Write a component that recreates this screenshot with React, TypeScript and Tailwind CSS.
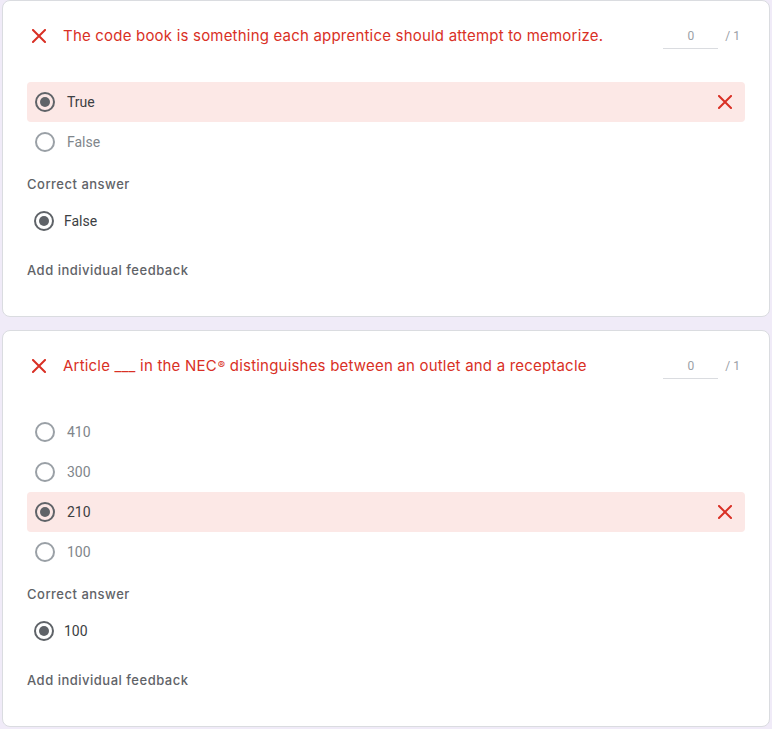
import React from "react";

type Question = {
  title: React.ReactNode;
  options: string[];
  picked: string;
  correct: string;
};

const questions: Question[] = [
  {
    title: "The code book is something each apprentice should attempt to memorize.",
    options: ["True", "False"],
    picked: "True",
    correct: "False",
  },
  {
    title: (
      <>
        Article ___ in the NEC<sup className="text-[11px] relative -top-[2px] ml-[1px]">®</sup> distinguishes between an
        outlet and a receptacle
      </>
    ),
    options: ["410", "300", "210", "100"],
    picked: "210",
    correct: "100",
  },
];

function Cross({ size = 14 }: { size?: number }) {
  return (
    <svg width={size} height={size} viewBox="0 0 14 14" className="shrink-0">
      <path d="M1 1 L13 13 M13 1 L1 13" stroke="#d93025" strokeWidth="2" strokeLinecap="square" fill="none" />
    </svg>
  );
}

function Radio({ checked }: { checked: boolean }) {
  return (
    <div
      className={
        checked
          ? "w-5 h-5 rounded-full border-2 border-[#5f6368] flex items-center justify-center shrink-0"
          : "w-5 h-5 rounded-full border-2 border-[#9aa0a6] shrink-0"
      }
    >
      {checked ? <div className="w-[10px] h-[10px] rounded-full bg-[#5f6368]" /> : null}
    </div>
  );
}

function QuestionCard({ q }: { q: Question }) {
  return (
    <div className="rounded-lg border border-[#dadce0] bg-white px-6 pt-[23px] pb-9">
      <div className="flex items-start">
        <div className="w-6 h-6 flex items-center justify-center">
          <Cross />
        </div>
        <div className="ml-3 flex-1 text-[15px] leading-6 text-[#d93025] font-['Inter',sans-serif] tracking-[0.2px]">
          {q.title}
        </div>
        <div className="flex items-start ml-4 mr-[5px] text-[12px] text-[#9aa0a6] font-['Roboto',sans-serif]">
          <div className="w-[55px] h-[25px] border-b border-[#dadce0] flex items-center justify-center leading-6">
            0
          </div>
          <div className="ml-[7px] leading-6">/ 1</div>
        </div>
      </div>

      <div className="mt-[33px] flex flex-col font-['Roboto',sans-serif] text-[14px]">
        {q.options.map((o) => {
          const wrong = o === q.picked;
          return (
            <div
              key={o}
              className={
                wrong
                  ? "h-10 flex items-center pl-2 pr-[13px] rounded bg-[#fce8e6]"
                  : "h-10 flex items-center pl-2 pr-[13px]"
              }
            >
              <Radio checked={wrong} />
              <div className={wrong ? "ml-3 flex-1 text-[#3c4043]" : "ml-3 flex-1 text-[#80868b]"}>{o}</div>
              {wrong ? <Cross /> : null}
            </div>
          );
        })}
      </div>

      <div className="mt-3 text-[13px] leading-5 font-medium text-[#5f6368] font-['Inter',sans-serif] tracking-[0.5px]">
        Correct answer
      </div>
      <div className="mt-[7px] h-10 flex items-center pl-[7px] font-['Roboto',sans-serif] text-[14px] text-[#3c4043]">
        <Radio checked />
        <div className="ml-[10px]">{q.correct}</div>
      </div>

      <div className="mt-[19px] text-[13px] leading-5 font-medium text-[#5f6368] font-['Inter',sans-serif] tracking-[0.5px]">
        Add individual feedback
      </div>
    </div>
  );
}

export default function App() {
  return (
    <div className="min-h-screen bg-[#f0ebf8] px-[2px] flex flex-col gap-[13px]">
      {questions.map((q, i) => (
        <QuestionCard key={i} q={q} />
      ))}
    </div>
  );
}
